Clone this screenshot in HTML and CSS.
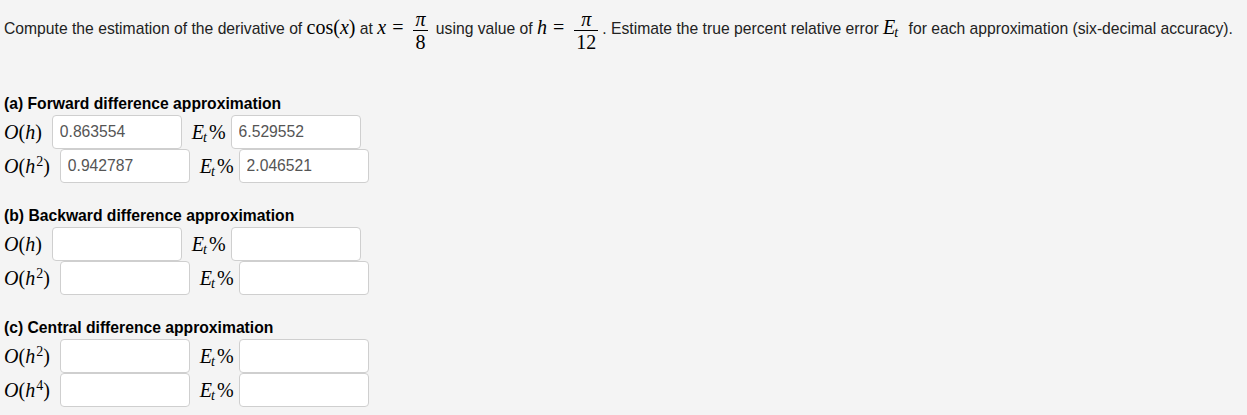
FILE: index.html
```html
<!DOCTYPE html>
<html>
<head>
<meta charset="utf-8">
<link rel="stylesheet" href="styles.css">
</head>
<body>
<p class="prompt">Compute the estimation of the derivative of <span class="m"><span class="rm">cos</span><span class="rm">(</span><i>x</i><span class="rm">)</span></span> at <span class="m"><i>x</i><span class="op">=</span><span class="frac"><span class="num"><i>π</i></span><span class="den">8</span></span></span> using value of <span class="m"><i>h</i><span class="op">=</span><span class="frac"><span class="num"><i>π</i></span><span class="den">12</span></span></span>. Estimate the true percent relative error <span class="m et"><i>E</i><sub>t</sub></span> for each approximation (six-decimal accuracy).</p>

<section class="part">
  <h3 class="part-title">(a) Forward difference approximation</h3>
  <div class="row">
    <span class="m lbl"><i>O</i><span class="rm">(</span><i>h</i><span class="rm">)</span></span>
    <input class="box" type="text" value="0.863554">
    <span class="m elbl"><i>E</i><sub>t</sub><span class="rm">%</span></span>
    <input class="box" type="text" value="6.529552">
  </div>
  <div class="row">
    <span class="m lbl"><i>O</i><span class="rm">(</span><i>h</i><sup>2</sup><span class="rm">)</span></span>
    <input class="box" type="text" value="0.942787">
    <span class="m elbl"><i>E</i><sub>t</sub><span class="rm">%</span></span>
    <input class="box" type="text" value="2.046521">
  </div>
</section>

<section class="part">
  <h3 class="part-title">(b) Backward difference approximation</h3>
  <div class="row">
    <span class="m lbl"><i>O</i><span class="rm">(</span><i>h</i><span class="rm">)</span></span>
    <input class="box" type="text" value="">
    <span class="m elbl"><i>E</i><sub>t</sub><span class="rm">%</span></span>
    <input class="box" type="text" value="">
  </div>
  <div class="row">
    <span class="m lbl"><i>O</i><span class="rm">(</span><i>h</i><sup>2</sup><span class="rm">)</span></span>
    <input class="box" type="text" value="">
    <span class="m elbl"><i>E</i><sub>t</sub><span class="rm">%</span></span>
    <input class="box" type="text" value="">
  </div>
</section>

<section class="part">
  <h3 class="part-title">(c) Central difference approximation</h3>
  <div class="row">
    <span class="m lbl"><i>O</i><span class="rm">(</span><i>h</i><sup>2</sup><span class="rm">)</span></span>
    <input class="box" type="text" value="">
    <span class="m elbl"><i>E</i><sub>t</sub><span class="rm">%</span></span>
    <input class="box" type="text" value="">
  </div>
  <div class="row">
    <span class="m lbl"><i>O</i><span class="rm">(</span><i>h</i><sup>4</sup><span class="rm">)</span></span>
    <input class="box" type="text" value="">
    <span class="m elbl"><i>E</i><sub>t</sub><span class="rm">%</span></span>
    <input class="box" type="text" value="">
  </div>
</section>
</body>
</html>
```

FILE: styles.css
```css
html, body {
  margin: 0;
  background: #f4f4f4;
}
body {
  padding: 10px 4px 0 4px;
  font-family: "Liberation Sans", Arial, sans-serif;
  font-size: 15.7px;
  color: #222;
}
.prompt {
  margin: 0;
  line-height: normal;
  white-space: nowrap;
}
.m {
  font-family: "Liberation Serif", "Times New Roman", serif;
  font-size: 20px;
  color: #000;
}
.m i { font-style: italic; }
.rm { font-style: normal; }
.m sub {
  font-style: italic;
  font-size: 0.7em;
  line-height: 0;
  vertical-align: -0.22em;
  margin-left: -1px;
  margin-right: 2px;
}
.m.et sub { margin-right: 6px; }
.m sup {
  font-size: 0.7em;
  line-height: 0;
  vertical-align: 0.5em;
  margin: 0 0 0 1px;
}
.op { margin: 0 6px; }
.frac {
  display: inline-flex;
  flex-direction: column;
  align-items: stretch;
  text-align: center;
  vertical-align: 8px;
  margin: 0 4px;
}
.num {
  line-height: 18px;
  padding: 0 2px 2px;
  border-bottom: 1px solid #000;
}
.den {
  line-height: 18px;
  padding: 2px 2px 0;
}
.part {
  margin-top: 44px;
}
.part + .part { margin-top: 24px; }
.part-title {
  margin: 0 0 2px;
  font-size: 15.7px;
  line-height: 18px;
  font-weight: bold;
  color: #000;
}
.row {
  display: flex;
  align-items: center;
  height: 34px;
}
.lbl { margin-right: 10px; }
.elbl { margin: 0 5px 0 10px; }
.box {
  box-sizing: border-box;
  width: 130px;
  height: 34px;
  margin: 0;
  padding: 0 7px;
  border: 1px solid #cfcfcf;
  border-radius: 4px;
  background: #fff;
  font-family: "Liberation Sans", Arial, sans-serif;
  font-size: 15.7px;
  color: #555;
  outline: none;
}
```
